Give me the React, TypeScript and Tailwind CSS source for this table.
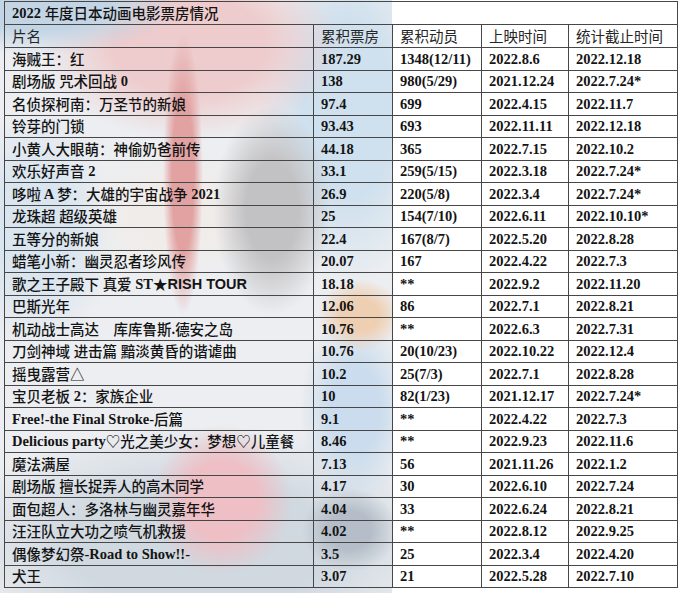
import React from 'react';

type Row = [string, string, string, string, string];

const rows: Row[] = [
  ['海贼王：红', '187.29', '1348(12/11)', '2022.8.6', '2022.12.18'],
  ['剧场版 咒术回战 0', '138', '980(5/29)', '2021.12.24', '2022.7.24*'],
  ['名侦探柯南：万圣节的新娘', '97.4', '699', '2022.4.15', '2022.11.7'],
  ['铃芽的门锁', '93.43', '693', '2022.11.11', '2022.12.18'],
  ['小黄人大眼萌：神偷奶爸前传', '44.18', '365', '2022.7.15', '2022.10.2'],
  ['欢乐好声音 2', '33.1', '259(5/15)', '2022.3.18', '2022.7.24*'],
  ['哆啦 A 梦：大雄的宇宙战争 2021', '26.9', '220(5/8)', '2022.3.4', '2022.7.24*'],
  ['龙珠超 超级英雄', '25', '154(7/10)', '2022.6.11', '2022.10.10*'],
  ['五等分的新娘', '22.4', '167(8/7)', '2022.5.20', '2022.8.28'],
  ['蜡笔小新：幽灵忍者珍风传', '20.07', '167', '2022.4.22', '2022.7.3'],
  ['歌之王子殿下 真爱 ST★RISH TOUR', '18.18', '**', '2022.9.2', '2022.11.20'],
  ['巴斯光年', '12.06', '86', '2022.7.1', '2022.8.21'],
  ['机动战士高达　库库鲁斯.德安之岛', '10.76', '**', '2022.6.3', '2022.7.31'],
  ['刀剑神域 进击篇 黯淡黄昏的谐谑曲', '10.76', '20(10/23)', '2022.10.22', '2022.12.4'],
  ['摇曳露营△', '10.2', '25(7/3)', '2022.7.1', '2022.8.28'],
  ['宝贝老板 2：家族企业', '10', '82(1/23)', '2021.12.17', '2022.7.24*'],
  ['Free!-the Final Stroke-后篇', '9.1', '**', '2022.4.22', '2022.7.3'],
  ['Delicious party♡光之美少女：梦想♡儿童餐', '8.46', '**', '2022.9.23', '2022.11.6'],
  ['魔法满屋', '7.13', '56', '2021.11.26', '2022.1.2'],
  ['剧场版 擅长捉弄人的高木同学', '4.17', '30', '2022.6.10', '2022.7.24'],
  ['面包超人：多洛林与幽灵嘉年华', '4.04', '33', '2022.6.24', '2022.8.21'],
  ['汪汪队立大功之喷气机救援', '4.02', '**', '2022.8.12', '2022.9.25'],
  ['偶像梦幻祭-Road to Show!!-', '3.5', '25', '2022.3.4', '2022.4.20'],
  ['犬王', '3.07', '21', '2022.5.28', '2022.7.10'],
];

// split a label into latin / cjk runs so each gets its own face
function Mixed({ text }: { text: string }) {
  const runs: { latin: boolean; s: string }[] = [];
  for (const ch of text) {
    const latin = /[\x20-\x7E]/.test(ch);
    const last = runs[runs.length - 1];
    if (last && last.latin === latin) last.s += ch;
    else runs.push({ latin, s: ch });
  }
  return (
    <>
      {runs.map((r, i) =>
        r.latin ? (
          r.s.startsWith('RISH') ? (
            <span key={i} className="font-['Liberation_Sans'] font-bold">{r.s}</span>
          ) : (
            <span key={i} className="font-['Liberation_Serif'] font-bold">{r.s}</span>
          )
        ) : (
          <span key={i} className="font-['Noto_Sans_CJK_SC',sans-serif] font-medium">{r.s}</span>
        )
      )}
    </>
  );
}

const cell = 'h-[22.5px] border-r border-b border-[#474747] flex items-center px-[7px] whitespace-pre overflow-hidden';
const num = "font-['Liberation_Serif'] font-bold";

export default function App() {
  return (
    <div className="relative w-[678px] h-[593px] overflow-hidden bg-white text-[14.5px] leading-none text-[#141414]">
      {/* faded poster behind the first two columns */}
      <div className="absolute inset-y-0 left-0 w-[392px] bg-[#eceef1] bg-[radial-gradient(20px_140px_at_183px_175px,#e3a2a2_55%,transparent),radial-gradient(42px_36px_at_360px_315px,#efcfb2_45%,transparent),radial-gradient(48px_42px_at_350px_530px,#b5bec8_45%,transparent),radial-gradient(70px_75px_at_222px_500px,#eebfc5_50%,transparent),radial-gradient(58px_105px_at_272px_210px,#c2c1c3_45%,transparent),radial-gradient(55px_95px_at_355px_410px,#cadced_45%,transparent),radial-gradient(95px_70px_at_175px_215px,#f0ecea_45%,transparent),radial-gradient(80px_120px_at_35px_230px,#d9e5ef_45%,transparent),radial-gradient(140px_50px_at_40px_5px,#c3d5e5_50%,transparent),radial-gradient(150px_95px_at_190px_45px,#eecbcc_50%,transparent),radial-gradient(90px_175px_at_348px_110px,#cfe0ee_50%,transparent),radial-gradient(260px_120px_at_200px_545px,#d0d8e0_50%,transparent)]" />

      <div className="relative ml-1 mt-px w-[674px] grid grid-cols-[309px_79px_89px_87px_109px] border-l border-t border-[#474747]">
        <div className="col-span-5 h-[23px] border-r border-b border-[#474747] flex items-center px-[7px] whitespace-pre">
          <Mixed text="2022 年度日本动画电影票房情况" />
        </div>

        {['片名', '累积票房', '累积动员', '上映时间', '统计截止时间'].map((h) => (
          <div key={h} className={`${cell} h-[23px] font-['Noto_Sans_CJK_SC',sans-serif] text-[#262626]`}>
            {h}
          </div>
        ))}

        {rows.map((r) => (
          <React.Fragment key={r[0]}>
            <div className={cell}>
              <Mixed text={r[0]} />
            </div>
            <div className={`${cell} ${num}`}>{r[1]}</div>
            <div className={`${cell} ${num}`}>{r[2]}</div>
            <div className={`${cell} ${num}`}>{r[3]}</div>
            <div className={`${cell} ${num}`}>{r[4]}</div>
          </React.Fragment>
        ))}
      </div>
    </div>
  );
}
